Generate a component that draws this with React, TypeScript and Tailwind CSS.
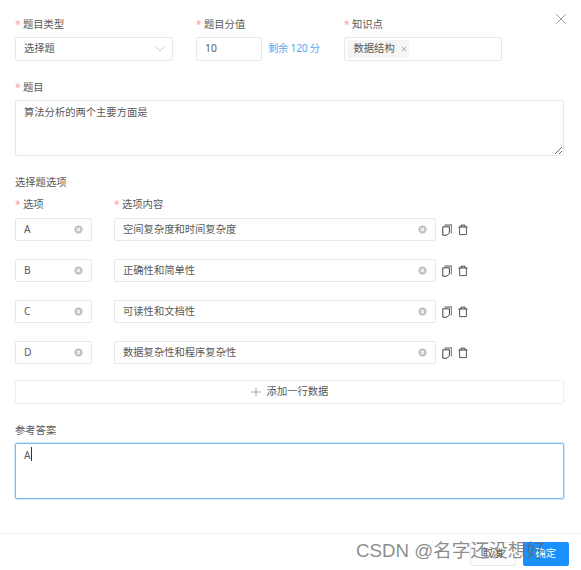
import { ChevronDown, CircleX, Plus, X } from "lucide-react";

const options = [
  { key: "A", content: "空间复杂度和时间复杂度" },
  { key: "B", content: "正确性和简单性" },
  { key: "C", content: "可读性和文档性" },
  { key: "D", content: "数据复杂性和程序复杂性" },
];

const Label = ({ text, required }: { text: string; required?: boolean }) => (
  <div className="h-[13px] flex items-center text-[10.3px] leading-[13px] text-[#595959]">
    {required && <span className="w-[8px] text-[10px] text-[#ff9c9c]">*</span>}
    {text}
  </div>
);

const ClearIcon = () => (
  <CircleX size={11} className="shrink-0 fill-[#bfbfbf] text-white" strokeWidth={2.2} />
);

const CopyIcon = () => (
  <svg width="10" height="12" viewBox="0 0 10 12" fill="none" className="shrink-0">
    <path d="M2.5 1h7v8.5" stroke="#8c8c8c" strokeWidth="1.4" />
    <path d="M.8 2.8h6.6v6l-2.4 2.4H.8z" stroke="#404040" strokeWidth="1" strokeLinejoin="round" />
  </svg>
);

const TrashIcon = () => (
  <svg width="10" height="12" viewBox="0 0 10 12" fill="none" className="shrink-0">
    <path d="M.4 3h9.2" stroke="#404040" strokeWidth="1" />
    <path d="M3 3V1.2h4V3" stroke="#404040" strokeWidth="1" />
    <path d="M1.6 3v7.6h6.8V3" stroke="#595959" strokeWidth="1" />
  </svg>
);

const App = () => {
  return (
    <div className="font-['Noto_Sans','Noto_Sans_CJK_SC',sans-serif] relative w-[581px] h-[570px] bg-white overflow-hidden">
      {/* Close */}
      <X size={18} strokeWidth={1.1} className="absolute left-[552px] top-[9.5px] text-[#888]" />

      <div className="pl-[15px] pr-[17px] pt-[18px]">
        {/* Top Row */}
        <div className="flex">
          <div className="w-[181px]">
            <Label text="题目类型" required />
            <div className="mt-[6px] w-[158px] h-[23.5px] pl-[8px] pr-[4px] flex items-center justify-between border border-[#e8e8e8] rounded-[2px] text-[10.3px] text-[#595959]">
              选择题
              <ChevronDown size={16} strokeWidth={0.9} className="text-[#aaa]" />
            </div>
          </div>
          <div className="w-[148px]">
            <Label text="题目分值" required />
            <div className="mt-[6px] flex items-center gap-[6px]">
              <div className="w-[66px] h-[23.5px] px-[8px] flex items-center border border-[#e8e8e8] rounded-[2px] text-[10.3px] text-[#595959]">
                10
              </div>
              <span className="text-[10.3px] tracking-[-0.25px] text-[#5aa5f5] whitespace-nowrap">剩余 120 分</span>
            </div>
          </div>
          <div className="w-[158px]">
            <Label text="知识点" required />
            <div className="mt-[6px] w-[158px] h-[23.5px] pl-[2px] flex items-center border border-[#e8e8e8] rounded-[2px]">
              <div className="w-[62px] h-[18px] pl-[6.5px] flex items-center gap-[5px] bg-[#f5f5f5] rounded-[2px] text-[10.3px] text-[#595959]">
                数据结构
                <X size={8} className="text-[#888]" />
              </div>
            </div>
          </div>
        </div>

        {/* Question */}
        <div className="mt-[20.5px]">
          <Label text="题目" required />
          <textarea
            readOnly
            defaultValue="算法分析的两个主要方面是"
            className="block mt-[6px] w-[549px] h-[56px] px-[8px] py-[3px] border border-[#e8e8e8] rounded-[2px] text-[10.3px] leading-[16px] text-[#595959] outline-none"
          />
        </div>

        {/* Options */}
        <div className="mt-[20px] h-[13px] text-[10.3px] leading-[13px] text-[#595959]">选择题选项</div>
        <div className="mt-[9px] flex">
          <div className="w-[99px]">
            <Label text="选项" required />
          </div>
          <Label text="选项内容" required />
        </div>
        <div className="mt-[6.5px] flex flex-col gap-[17.5px]">
          {options.map((option) => (
            <div key={option.key} className="flex items-center h-[23.5px]">
              <div className="w-[77px] h-[23.5px] pl-[8px] pr-[7.5px] flex items-center justify-between border border-[#e8e8e8] rounded-[2px] text-[10.3px] text-[#595959]">
                {option.key}
                <ClearIcon />
              </div>
              <div className="ml-[22px] w-[322px] h-[23.5px] pl-[8px] pr-[7.5px] flex items-center justify-between border border-[#e8e8e8] rounded-[2px] text-[10.3px] text-[#595959]">
                {option.content}
                <ClearIcon />
              </div>
              <div className="ml-[6px] pt-[1px] flex items-center gap-[6px]">
                <CopyIcon />
                <TrashIcon />
              </div>
            </div>
          ))}
        </div>

        {/* Add Row */}
        <div className="mt-[16px] w-[549px] h-[23.5px] pr-[2px] flex items-center justify-center gap-[4px] border border-dotted border-[#dcdcdc] rounded-[2px] text-[10.3px] text-[#595959]">
          <Plus size={14} strokeWidth={0.9} />
          添加一行数据
        </div>

        {/* Reference Answer */}
        <div className="mt-[20px]">
          <Label text="参考答案" />
          <div className="mt-[6.5px] w-[549px] h-[56px] px-[8px] py-[3px] border border-[#7cbcf8] rounded-[2px] shadow-[0_0_0_1px_rgba(24,144,255,0.2)] flex items-start text-[10.3px] leading-[16px] text-[#595959]">
            A<span className="w-px h-[14px] bg-[#333]" />
          </div>
        </div>
      </div>

      {/* Footer */}
      <div className="mt-[34px] h-[37px] pt-[8px] pr-[12px] border-t border-[#f0f0f0] flex justify-end gap-[6.5px]">
        <div className="w-[46.5px] h-[23.5px] flex items-center justify-center border border-[#e8e8e8] rounded-[2px] text-[10.3px] text-[#595959]">
          取消
        </div>
        <div className="w-[46.5px] h-[23.5px] flex items-center justify-center bg-[#1890ff] rounded-[2px] text-[10.3px] text-white">
          确定
        </div>
      </div>

      {/* Watermark */}
      <div className="absolute left-[356px] top-[537.5px] font-['Liberation_Sans','Noto_Sans_CJK_SC',sans-serif] text-[18.7px] leading-[26px] text-[#666]/75 whitespace-nowrap">
        CSDN @名字还没想好
      </div>
    </div>
  );
};

export default App;
